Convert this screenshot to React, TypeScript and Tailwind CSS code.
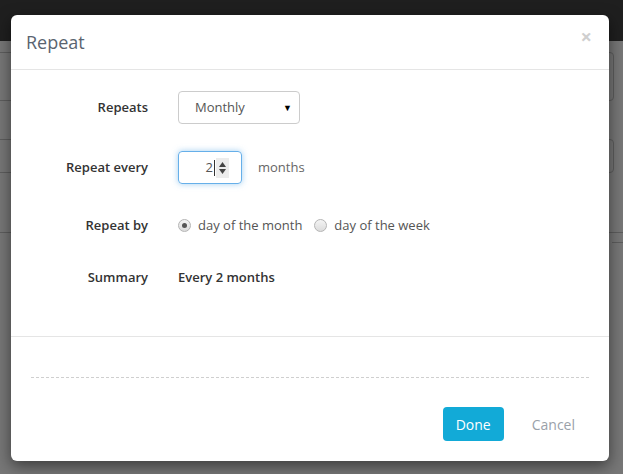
import React from 'react';

const font = { fontFamily: '"Open Sans", "Noto Sans", Arial, sans-serif' };

const Radio = ({ checked }: { checked?: boolean }) => (
  <span className="flex h-[13px] w-[13px] items-center justify-center rounded-full border border-[#b5b5b5] bg-gradient-to-b from-[#f4f4f4] to-[#dcdcdc]">
    {checked && <span className="h-[5px] w-[5px] rounded-full bg-[#555]" />}
  </span>
);

const Row = ({ label, className, children }: { label: string; className?: string; children: React.ReactNode }) => (
  <div className={`flex h-[33px] items-center ${className ?? ''}`}>
    <div className="w-[133px] text-right text-[13px] font-semibold text-[#333]">{label}</div>
    <div className="ml-[30px] flex items-center">{children}</div>
  </div>
);

export default function App() {
  return (
    <div className="relative h-[474px] w-full overflow-hidden bg-[#777]" style={font}>
      {/* Page behind the backdrop */}
      <div className="h-[41px] bg-[#1f1f1f]" />
      <div className="ml-[-10px] mt-[11px] h-[49px] w-[624px] rounded border border-[#5d5d5d]" />
      <div className="ml-[-10px] mt-[38px] h-[34px] w-[624px] rounded border border-[#5d5d5d]" />
      <div className="mt-[59px] h-px w-full bg-[#5d5d5d]" />
      <div className="mt-[9px] ml-[612px] h-px w-[11px] bg-[#5d5d5d]" />

      {/* Modal */}
      <div className="absolute left-[11px] top-[15px] flex h-[446px] w-[598px] flex-col rounded-[6px] bg-white shadow-[0_5px_15px_rgba(0,0,0,0.5)]">
        <div className="flex h-[55px] items-center justify-between border-b border-[#e5e5e5] pl-[15px] pr-[17px]">
          <h4 className="text-[18px] leading-none text-[#5a6470]">Repeat</h4>
          <span className="mt-[-10px] text-[20px] font-bold leading-none text-[#cfcfcf]">×</span>
        </div>

        <div className="h-[267px] border-b border-[#e5e5e5] pl-[4px] pt-[21px]">
          <Row label="Repeats">
            <div className="flex h-[33px] w-[122px] items-center justify-between rounded-[4px] border border-[#ccc] pl-[16px] pr-[7px] text-[13px] text-[#555]">
              <span>Monthly</span>
              <span className="text-[9px] text-black">▼</span>
            </div>
          </Row>

          <Row label="Repeat every" className="mt-[27px]">
            <div className="flex h-[33px] w-[64px] items-center justify-end rounded-[4px] border border-[#66afe9] pr-[12px] shadow-[0_0_6px_rgba(102,175,233,0.6)]">
              <span className="text-[13px] text-[#555]">2</span>
              <span className="ml-px h-[16px] w-px bg-[#333]" />
              <span className="ml-px flex h-[20px] w-[13px] flex-col items-center justify-center gap-[2px] bg-[#ececec]">
                <svg width="7" height="5" viewBox="0 0 7 5"><path d="M3.5 0L7 5H0z" fill="#444" /></svg>
                <svg width="7" height="5" viewBox="0 0 7 5"><path d="M0 0h7L3.5 5z" fill="#444" /></svg>
              </span>
            </div>
            <span className="ml-[16px] text-[13px] text-[#666]">months</span>
          </Row>

          <Row label="Repeat by" className="mt-[25px]">
            <Radio checked />
            <span className="ml-[7px] text-[13px] text-[#555]">day of the month</span>
            <span className="ml-[12px]">
              <Radio />
            </span>
            <span className="ml-[7px] text-[13px] text-[#555]">day of the week</span>
          </Row>

          <Row label="Summary" className="mt-[19px]">
            <span className="text-[13px] font-semibold text-[#333]">Every 2 months</span>
          </Row>
        </div>

        <div className="px-[20px] pt-[40px]">
          <div className="border-t border-dashed border-[#cfcfcf]" />
          <div className="mt-[29px] flex items-center justify-end">
            <button className="h-[34px] w-[61px] rounded-[4px] bg-[#12aad7] text-[14px] text-white">Done</button>
            <button className="ml-[14px] h-[34px] px-[14px] text-[14px] text-[#9aa1a9]">Cancel</button>
          </div>
        </div>
      </div>
    </div>
  );
}
